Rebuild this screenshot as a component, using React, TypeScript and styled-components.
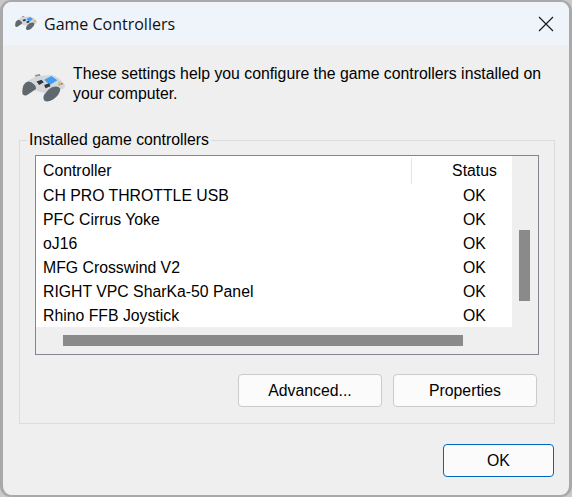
import * as React from 'react'
import styled, { createGlobalStyle } from 'styled-components'

const GlobalStyle = createGlobalStyle`
  html, body {
    margin: 0;
    padding: 0;
    background: #c9c9c9;
    font-family: "Liberation Sans", Arial, sans-serif;
  }
`

const Dialog = styled.div`
  box-sizing: border-box;
  width: 572px;
  height: 497px;
  display: flex;
  flex-direction: column;
  background: #efefef;
  border: solid #a9a9a9;
  border-width: 2px 3px;
  border-radius: 11px;
  overflow: hidden;
  color: #000;
`

const TitleBar = styled.div`
  height: 43px;
  flex: none;
  display: flex;
  align-items: center;
  background: #eff4fb;
  padding: 0 12px;
  gap: 7px;
`

const TitleText = styled.span`
  flex: 1;
  font-family: "Open Sans", sans-serif;
  font-size: 16px;
  color: #111;
`

const Close = styled.svg`
  width: 16px;
  height: 16px;
  margin-right: 3px;
`

const Intro = styled.div`
  display: flex;
  align-items: flex-start;
  padding: 19px 0 0 19px;
  height: 95px;
  box-sizing: border-box;
  flex: none;
  gap: 8px;
`

const IntroIcon = styled.div`
  margin-top: 10px;
  flex: none;
`

const IntroText = styled.p`
  margin: 0;
  font-size: 15.8px;
  line-height: 20px;
  width: 480px;
`

const GroupBox = styled.div`
  box-sizing: border-box;
  margin: 0 0 0 16px;
  padding: 14px 15px 0 15px;
  width: 536px;
  height: 284px;
  flex: none;
  border: 1px solid #dcdcdc;
  display: flex;
  flex-direction: column;
  position: relative;
`

const Legend = styled.div`
  position: absolute;
  top: -10px;
  left: 7px;
  padding: 0 2px;
  background: #efefef;
  font-size: 15.8px;
  line-height: 18px;
`

const ListFrame = styled.div`
  box-sizing: border-box;
  width: 504px;
  height: 200px;
  flex: none;
  border: 1px solid #82878f;
  display: grid;
  grid-template-columns: 476px 1fr;
  grid-template-rows: 171px 1fr;
  background: #efefef;
`

const Rows = styled.div`
  background: #fff;
  display: flex;
  flex-direction: column;
`

const Row = styled.div<{ $header?: boolean }>`
  display: grid;
  grid-template-columns: 376px 1fr;
  height: 24px;
  flex: none;
  font-size: 15.8px;
  line-height: 26px;
  margin-top: ${p => (p.$header ? '2px' : '0')};
  margin-bottom: ${p => (p.$header ? '1px' : '0')};
`

const NameCell = styled.div<{ $header?: boolean }>`
  padding-left: 7px;
  border-right: ${p => (p.$header ? '1px solid #e4e4e4' : 'none')};
`

const StatusCell = styled.div`
  text-align: center;
  padding-left: 25px;
`

const VTrack = styled.div`
  padding: 74px 0 0 7px;
`

const VThumb = styled.div`
  width: 11px;
  height: 71px;
  background: #8a8a8a;
`

const HTrack = styled.div`
  grid-column: 1 / 3;
  padding: 8px 0 0 27px;
`

const HThumb = styled.div`
  width: 400px;
  height: 11px;
  background: #8a8a8a;
`

const ButtonRow = styled.div`
  display: flex;
  justify-content: flex-end;
  gap: 11px;
  margin-top: 19px;
  padding-right: 2px;
`

const Button = styled.button<{ $primary?: boolean }>`
  box-sizing: border-box;
  height: 33px;
  width: ${p => (p.$primary ? '111px' : '144px')};
  background: #fbfbfb;
  border: 1px solid ${p => (p.$primary ? '#0067c0' : '#cbcbcb')};
  border-radius: 4px;
  font-family: "Liberation Sans", Arial, sans-serif;
  font-size: 15.8px;
  color: #000;
  padding: 0;
`

const Footer = styled.div`
  display: flex;
  justify-content: flex-end;
  padding: 20px 15px 0 0;
`

const rows = [
  'CH PRO THROTTLE USB',
  'PFC Cirrus Yoke',
  'oJ16',
  'MFG Crosswind V2',
  'RIGHT VPC SharKa-50 Panel',
  'Rhino FFB Joystick'
]

const Gamepad = ({ size }: { size: number }) => (
  <svg width={size} height={size * 0.67} viewBox="36 27 130 87" style={{ display: 'block' }}>
    <path d="M75 30 L90 27 L92 34 L78 38 Z" fill="#8d9298" />
    <path d="M45 55 Q60 40 85 33 L125 30 Q140 33 150 42 L165 58 Q168 68 160 72 L135 75 L105 85 L70 75 Z" fill="#d5d7da" />
    <path d="M55 50 Q45 52 40 62 Q35 80 38 88 Q45 96 55 88 Q70 78 78 72 Q80 65 72 58 Q65 50 55 50 Z" fill="#5f686f" />
    <path d="M125 68 Q145 60 152 72 Q150 90 130 104 Q112 114 104 108 Q98 100 103 90 Q112 75 125 68 Z" fill="#5f686f" />
    <path d="M103 44 L125 33 L143 46 L120 60 Z" fill="#3f9ff2" />
    <path d="M80 50 L95 44 L102 52 L88 60 Z" fill="#33373b" />
    <path d="M103 60 L118 55 L122 64 L107 70 Z" fill="#33373b" />
    <rect x="146" y="50" width="6" height="5" fill="#e5b93c" />
    <rect x="153" y="54" width="6" height="5" fill="#d9634f" />
    <rect x="146" y="57" width="6" height="4" fill="#6cb56a" />
  </svg>
)

export default function App() {
  return (
    <>
      <GlobalStyle />
      <Dialog>
        <TitleBar>
          <Gamepad size={22} />
          <TitleText>Game Controllers</TitleText>
          <Close viewBox="0 0 16 16">
            <path d="M1 1 L15 15 M15 1 L1 15" stroke="#1a1a1a" strokeWidth="1.2" fill="none" />
          </Close>
        </TitleBar>
        <Intro>
          <IntroIcon>
            <Gamepad size={43} />
          </IntroIcon>
          <IntroText>These settings help you configure the game controllers installed on your computer.</IntroText>
        </Intro>
        <GroupBox>
          <Legend>Installed game controllers</Legend>
          <ListFrame>
            <Rows>
              <Row $header>
                <NameCell $header>Controller</NameCell>
                <StatusCell>Status</StatusCell>
              </Row>
              {rows.map(name => (
                <Row key={name}>
                  <NameCell>{name}</NameCell>
                  <StatusCell>OK</StatusCell>
                </Row>
              ))}
            </Rows>
            <VTrack>
              <VThumb />
            </VTrack>
            <HTrack>
              <HThumb />
            </HTrack>
          </ListFrame>
          <ButtonRow>
            <Button>Advanced...</Button>
            <Button>Properties</Button>
          </ButtonRow>
        </GroupBox>
        <Footer>
          <Button $primary>OK</Button>
        </Footer>
      </Dialog>
    </>
  )
}
